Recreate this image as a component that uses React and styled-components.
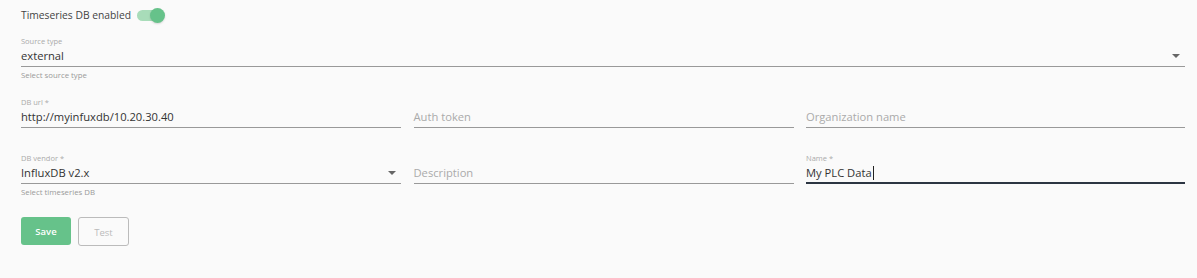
import React from "react";
import styled, { createGlobalStyle } from "styled-components";

const Global = createGlobalStyle`
  html, body { margin: 0; padding: 0; background: #fafafa; }
  body { font-family: "Open Sans", "Noto Sans", sans-serif; color: #333; }
`;

const Page = styled.div`
  width: 1197px;
  height: 278px;
  box-sizing: border-box;
  padding: 6px 12px 0 21px;
  display: flex;
  flex-direction: column;
`;

const ToggleRow = styled.div`
  display: flex;
  align-items: center;
  gap: 6px;
  height: 18px;
  font-size: 10.3px;
  color: #444;
`;

const Track = styled.div`
  position: relative;
  width: 25px;
  height: 11px;
  border-radius: 6px;
  background: #a8dcb9;
`;

const Knob = styled.div`
  position: absolute;
  right: -3px;
  top: -2px;
  width: 15px;
  height: 15px;
  border-radius: 50%;
  background: #66c28a;
  box-shadow: 0 1px 2px rgba(0,0,0,0.15);
`;

const Field = styled.div`
  display: flex;
  flex-direction: column;
`;

const Label = styled.div`
  font-size: 7.5px;
  height: 10px;
  line-height: 10px;
  color: #aaa;
`;

const Value = styled.div`
  font-size: 11.2px;
  height: 21px;
  padding-bottom: 1px;
  color: ${(p) => (p.$placeholder ? "#aaa" : "#333")};
  border-bottom: ${(p) => (p.$focused ? "2px solid #2c3542" : "1px solid #999")};
  display: flex;
  align-items: center;
  justify-content: space-between;
  box-sizing: border-box;
`;

const Caret = styled.span`
  display: inline-block;
  width: 1px;
  height: 14px;
  background: #222;
  margin-left: 1px;
  vertical-align: -3px;
`;

const Arrow = styled.span`
  width: 0;
  height: 0;
  border-left: 4px solid transparent;
  border-right: 4px solid transparent;
  border-top: 4px solid #666;
  margin-right: 5px;
`;

const Helper = styled.div`
  font-size: 7.8px;
  height: 12px;
  margin-top: 2px;
  line-height: 12px;
  color: #999;
`;

const Row = styled.div`
  display: grid;
  grid-template-columns: ${(p) => (p.$single ? "1164px" : "380px 380px 379px")};
  column-gap: 12.5px;
  margin-top: ${(p) => p.$mt || 0}px;
`;

const Buttons = styled.div`
  display: flex;
  gap: 7px;
  margin-top: ${(p) => p.$mt || 0}px;
`;

const Button = styled.button`
  width: ${(p) => (p.$primary ? "50px" : "51px")};
  height: ${(p) => (p.$primary ? "28px" : "29px")};
  border-radius: 3px;
  font-family: inherit;
  font-size: 9.5px;
  font-weight: ${(p) => (p.$primary ? 600 : 400)};
  padding: 0;
  cursor: pointer;
  background: ${(p) => (p.$primary ? "#66c28a" : "transparent")};
  color: ${(p) => (p.$primary ? "#fff" : "#bbb")};
  border: ${(p) => (p.$primary ? "none" : "1px solid #bbb")};
  padding-top: ${(p) => (p.$primary ? 0 : 2)}px;
`;

const TextField = ({ label, value, placeholder, helper, select, focused }) => (
  <Field>
    <Label>{label || ""}</Label>
    <Value $placeholder={!value} $focused={focused}>
      <span>
        {value || placeholder}
        {focused && <Caret />}
      </span>
      {select && <Arrow />}
    </Value>
    <Helper>{helper || ""}</Helper>
  </Field>
);

export default function App() {
  return (
    <>
      <Global />
      <Page>
        <ToggleRow>
          Timeseries DB enabled
          <Track>
            <Knob />
          </Track>
        </ToggleRow>
        <Row $single $mt={12}>
          <TextField label="Source type" value="external" helper="Select source type" select />
        </Row>
        <Row $mt={16}>
          <TextField label="DB url *" value="http://myinfuxdb/10.20.30.40" />
          <TextField placeholder="Auth token" />
          <TextField placeholder="Organization name" />
        </Row>
        <Row $mt={11}>
          <TextField label="DB vendor *" value="InfluxDB v2.x" helper="Select timeseries DB" select />
          <TextField placeholder="Description" />
          <TextField label="Name *" value="My PLC Data" focused />
        </Row>
        <Buttons $mt={19}>
          <Button $primary>Save</Button>
          <Button>Test</Button>
        </Buttons>
      </Page>
    </>
  );
}
